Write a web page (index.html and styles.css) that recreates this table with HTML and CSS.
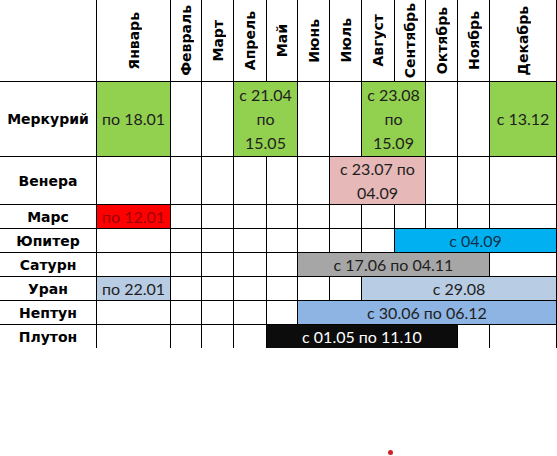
FILE: index.html
```html
<!DOCTYPE html>
<html lang="ru">
<head>
<meta charset="utf-8">
<link rel="stylesheet" href="styles.css">
</head>
<body>
<div class="sheet">
  <div class="grid">
    <div class="cell"></div>
    <div class="cell month"><span>Январь</span></div>
    <div class="cell month"><span>Февраль</span></div>
    <div class="cell month"><span>Март</span></div>
    <div class="cell month"><span>Апрель</span></div>
    <div class="cell month"><span>Май</span></div>
    <div class="cell month"><span>Июнь</span></div>
    <div class="cell month"><span>Июль</span></div>
    <div class="cell month"><span>Август</span></div>
    <div class="cell month"><span>Сентябрь</span></div>
    <div class="cell month"><span>Октябрь</span></div>
    <div class="cell month"><span>Ноябрь</span></div>
    <div class="cell month"><span>Декабрь</span></div>

    <div class="cell name">Меркурий</div>
    <div class="cell val green">по 18.01</div>
    <div class="cell"></div>
    <div class="cell"></div>
    <div class="cell val green span2">с 21.04<br>по<br>15.05</div>
    <div class="cell"></div>
    <div class="cell"></div>
    <div class="cell val green span2">с 23.08<br>по<br>15.09</div>
    <div class="cell"></div>
    <div class="cell"></div>
    <div class="cell val green">с 13.12</div>

    <div class="cell name">Венера</div>
    <div class="cell"></div>
    <div class="cell"></div>
    <div class="cell"></div>
    <div class="cell"></div>
    <div class="cell"></div>
    <div class="cell"></div>
    <div class="cell val pink span3">с 23.07 по<br>04.09</div>
    <div class="cell"></div>
    <div class="cell"></div>
    <div class="cell"></div>

    <div class="cell name">Марс</div>
    <div class="cell val red">по 12.01</div>
    <div class="cell"></div>
    <div class="cell"></div>
    <div class="cell"></div>
    <div class="cell"></div>
    <div class="cell"></div>
    <div class="cell"></div>
    <div class="cell"></div>
    <div class="cell"></div>
    <div class="cell"></div>
    <div class="cell"></div>
    <div class="cell"></div>

    <div class="cell name">Юпитер</div>
    <div class="cell"></div>
    <div class="cell"></div>
    <div class="cell"></div>
    <div class="cell"></div>
    <div class="cell"></div>
    <div class="cell"></div>
    <div class="cell"></div>
    <div class="cell"></div>
    <div class="cell val cyan span4">с 04.09</div>

    <div class="cell name">Сатурн</div>
    <div class="cell"></div>
    <div class="cell"></div>
    <div class="cell"></div>
    <div class="cell"></div>
    <div class="cell"></div>
    <div class="cell val gray span6">с 17.06 по 04.11</div>
    <div class="cell"></div>

    <div class="cell name">Уран</div>
    <div class="cell val pale">по 22.01</div>
    <div class="cell"></div>
    <div class="cell"></div>
    <div class="cell"></div>
    <div class="cell"></div>
    <div class="cell"></div>
    <div class="cell"></div>
    <div class="cell val pale span5">с 29.08</div>

    <div class="cell name">Нептун</div>
    <div class="cell"></div>
    <div class="cell"></div>
    <div class="cell"></div>
    <div class="cell"></div>
    <div class="cell"></div>
    <div class="cell val blue span7">с 30.06 по 06.12</div>

    <div class="cell name">Плутон</div>
    <div class="cell"></div>
    <div class="cell"></div>
    <div class="cell"></div>
    <div class="cell"></div>
    <div class="cell val black span6">с 01.05 по 11.10</div>
    <div class="cell"></div>
    <div class="cell"></div>
  </div>
  <div class="dot"></div>
</div>
</body>
</html>
```

FILE: styles.css
```css
html, body {
  margin: 0;
  padding: 0;
  background: #ffffff;
}

.sheet {
  width: 557px;
  height: 456px;
  overflow: hidden;
  background: #ffffff;
}

.grid {
  display: grid;
  grid-template-columns: 96px 73px 30px 31px 32px 30px 31px 31px 32px 30px 31px 31px 66px;
  grid-template-rows: 81px 74px 47px 23px 23px 23px 23px 23px 23px;
  gap: 1px;
  padding-right: 1px;
  width: 556px;
  background: #000000;
}

.cell {
  background: #ffffff;
  display: flex;
  align-items: center;
  justify-content: center;
  overflow: hidden;
}

.month span {
  writing-mode: vertical-rl;
  transform: rotate(180deg);
  font-family: "DejaVu Sans", Verdana, sans-serif;
  font-weight: bold;
  font-size: 14px;
  line-height: 1;
  color: #000000;
  white-space: nowrap;
}

.name {
  font-family: "DejaVu Sans", Verdana, sans-serif;
  font-weight: bold;
  font-size: 14px;
  color: #000000;
  white-space: nowrap;
}

.val {
  font-family: Lato, "Open Sans", sans-serif;
  font-size: 16px;
  line-height: 24px;
  color: #1e1e1e;
  text-align: center;
  white-space: nowrap;
}

.span2 { grid-column: span 2; }
.span3 { grid-column: span 3; }
.span4 { grid-column: span 4; }
.span5 { grid-column: span 5; }
.span6 { grid-column: span 6; }
.span7 { grid-column: span 7; }

.green { background: #92d050; }
.pink { background: #e6b8b7; }
.red { background: #ff0000; color: #9c0006; }
.cyan { background: #00b0f0; color: #10304a; }
.gray { background: #a6a6a6; }
.pale { background: #b8cce4; }
.blue { background: #8db4e2; }
.black { background: #0c0c0c; color: #ffffff; }

.dot {
  width: 5px;
  height: 5px;
  border-radius: 50%;
  background: #d0202a;
  margin-left: 388px;
  margin-top: 102px;
}
```
